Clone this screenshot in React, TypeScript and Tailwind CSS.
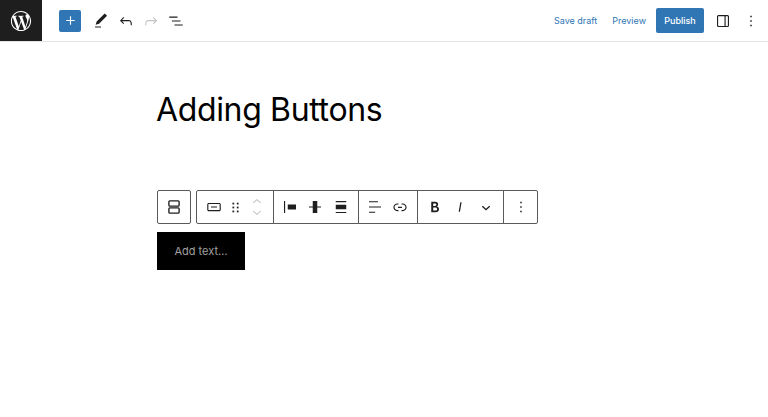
const font = { fontFamily: "Inter, 'Liberation Sans', sans-serif" };

function Icon({ children, size = 18 }: { children: React.ReactNode; size?: number }) {
  return (
    <svg width={size} height={size} viewBox="0 0 24 24" fill="#1e1e1e">
      {children}
    </svg>
  );
}

function WpLogo() {
  return (
    <svg width="22" height="22" viewBox="0 0 24 24" fill="#fff">
      <path d="M12 1C5.9 1 1 5.9 1 12s4.9 11 11 11 11-4.9 11-11S18.100 1 12 1zM2.100 12c0-1.400.3-2.800.9-4l4.700 13C4.400 19.400 2.100 16 2.100 12zM12 21.900c-1 0-1.900-.1-2.800-.4l3-8.700 3.100 8.400c0 .1 0 .1.100.1-1 .4-2.200.6-3.400.6zm1.400-14.600c.6 0 1.100-.1 1.100-.1.500-.1.500-.8 0-.8 0 0-1.600.1-2.700.1-1 0-2.600-.1-2.600-.1-.5 0-.6.800 0 .8 0 0 .5.100 1 .1l1.500 4.200-2.100 6.400L6 7.300c.6 0 1.100-.1 1.100-.1.500-.1.500-.8 0-.8 0 0-1.600.1-2.700.1h-.6C5.600 3.800 8.600 2.100 12 2.100c2.600 0 4.900 1 6.700 2.600h-.1c-1 0-1.700.9-1.700 1.800 0 .8.500 1.500 1 2.400.4.700.8 1.500.8 2.800 0 .9-.3 1.900-.8 3.300l-1 3.400-3.500-10.700zm3.600 13.300l3-8.800c.6-1.400.7-2.600.7-3.600 0-.4 0-.7-.1-1 .8 1.400 1.200 3.100 1.200 4.800 0 3.700-2 6.900-4.800 8.600z" />
    </svg>
  );
}

function ToolGroup({ children, last }: { children: React.ReactNode; last?: boolean }) {
  return (
    <div className={`flex h-full items-center ${last ? "" : "border-r border-[#5a5a5a]"}`}>
      {children}
    </div>
  );
}

function ToolIcon({ width, children }: { width: number; children: React.ReactNode }) {
  return (
    <div className="flex h-full items-center justify-center" style={{ width }}>
      {children}
    </div>
  );
}

export default function App() {
  return (
    <div className="h-[417px] w-[768px] overflow-hidden bg-white" style={font}>
      <header className="flex h-[42px] items-center border-b border-[#e5e5e5] bg-white">
        <div className="flex h-[41px] w-[42px] shrink-0 items-center justify-center bg-[#1e1e1e]">
          <WpLogo />
        </div>
        <div className="ml-[17px] flex h-[22px] w-[22px] items-center justify-center rounded-[2px] bg-[#3076b5]">
          <svg width="17" height="17" viewBox="0 0 24 24" fill="#fff">
            <path d="M18 11.200h-5.200V6h-1.600v5.200H6v1.600h5.200V18h1.600v-5.200H18z" />
          </svg>
        </div>
        <div className="ml-[7px] flex items-center">
          <ToolIcon width={25}>
            <Icon>
              <path d="M20.100 5.100L16.900 2 6.200 12.700l-1.300 4.400 4.500-1.300L20.100 5.100zM4 20.800h8v-1.500H4v1.500z" />
            </Icon>
          </ToolIcon>
          <ToolIcon width={25}>
            <Icon>
              <path d="M18.300 11.700c-.6-.6-1.400-.9-2.300-.9H6.700l2.900-3.300-1.100-1-4.500 5L8.500 16l1-1-2.700-2.700H16c.5 0 .9.200 1.300.5 1 1 1 3.400 1 4.500v.3h1.500v-.2c0-1.500 0-4.300-1.500-5.700z" />
            </Icon>
          </ToolIcon>
          <ToolIcon width={25}>
            <svg width="18" height="18" viewBox="0 0 24 24" fill="#c4c4c4">
              <path d="M15.600 6.500l-1.100 1 2.900 3.300H8c-.9 0-1.700.3-2.300.9-1.400 1.500-1.400 4.200-1.400 5.600v.2h1.500v-.3c0-1.100 0-3.500 1-4.500.3-.3.700-.5 1.300-.5h9.200L14.500 15l1.100 1.100 4.600-4.600-4.600-5z" />
            </svg>
          </ToolIcon>
          <ToolIcon width={25}>
            <Icon>
              <path d="M3 6h11v1.500H3V6zm3.500 5.200H18v1.500H6.500v-1.500zM10 16.500h11V18H10v-1.500z" />
            </Icon>
          </ToolIcon>
        </div>
        <div className="ml-auto flex items-center">
          <span className="text-[9px] text-[#3076b5]">Save draft</span>
          <span className="ml-[15px] text-[9px] text-[#3076b5]">Preview</span>
          <div className="ml-[10px] flex h-[25px] w-[48px] items-center justify-center rounded-[2px] bg-[#3076b5] text-[9px] font-medium text-white">
            Publish
          </div>
          <div className="ml-[9px] flex w-[20px] justify-center">
            <Icon>
              <path d="M18 4H6a2 2 0 0 0-2 2v12a2 2 0 0 0 2 2h12a2 2 0 0 0 2-2V6a2 2 0 0 0-2-2zM5.500 18V6c0-.3.2-.5.5-.5h8v13H6c-.3 0-.5-.2-.5-.5zm13 0c0 .3-.2.5-.5.500h-2.500v-13H18c.3 0 .5.2.5.5v12z" />
            </Icon>
          </div>
          <div className="ml-[8px] mr-[7px] flex w-[20px] justify-center">
            <Icon>
              <path d="M13 19h-2v-2h2v2zm0-6h-2v-2h2v2zm0-6h-2V5h2v2z" />
            </Icon>
          </div>
        </div>
      </header>
      <main className="pl-[157px]">
        <h1 className="mt-[46px] -ml-px text-[32px] leading-[44px] font-normal tracking-[-0.35px] text-black">
          Adding Buttons
        </h1>
        <div className="mt-[58px] flex h-[34px] items-stretch gap-[5px]">
          <div className="flex w-[34px] items-center justify-center rounded-[2px] border border-[#5a5a5a]">
            <svg width="18" height="18" viewBox="0 0 24 24" fill="none" stroke="#1e1e1e" strokeWidth="1.800">
              <rect x="5.200" y="3.900" width="13.600" height="7" rx="1.200" />
              <rect x="5.200" y="13.100" width="13.600" height="7" rx="1.200" />
            </svg>
          </div>
          <div className="flex items-center rounded-[2px] border border-[#5a5a5a]">
            <ToolGroup>
              <ToolIcon width={33}>
                <Icon>
                  <path d="M19 6.500H5c-1.100 0-2 .9-2 2v7c0 1.100.9 2 2 2h14c1.100 0 2-.9 2-2v-7c0-1.100-.9-2-2-2zm.500 9c0 .3-.2.500-.5.500H5c-.3 0-.5-.2-.5-.5v-7c0-.3.2-.5.5-.5h14c.3 0 .5.200.5.500v7zM8 12.800h8v-1.500H8v1.500z" />
                </Icon>
              </ToolIcon>
              <ToolIcon width={10}>
                <svg width="7" height="11" viewBox="0 0 8 12" fill="#1e1e1e">
                  <rect x="0.500" y="0.500" width="2" height="2" />
                  <rect x="5.500" y="0.500" width="2" height="2" />
                  <rect x="0.500" y="5" width="2" height="2" />
                  <rect x="5.500" y="5" width="2" height="2" />
                  <rect x="0.500" y="9.500" width="2" height="2" />
                  <rect x="5.500" y="9.500" width="2" height="2" />
                </svg>
              </ToolIcon>
              <ToolIcon width={33}>
                <svg width="10" height="18" viewBox="0 0 12 22" fill="none" stroke="#c4c4c4" strokeWidth="1.300">
                  <path d="M1.500 6L6 2l4.500 4M1.500 16L6 20l4.500-4" />
                </svg>
              </ToolIcon>
            </ToolGroup>
            <ToolGroup>
              <ToolIcon width={32}>
                <Icon>
                  <path d="M4 4h1.500v16H4V4zM9 8.700h11v6.600H9V8.700z" />
                </Icon>
              </ToolIcon>
              <ToolIcon width={18}>
                <Icon>
                  <path d="M9 4h6v7.250h5v1.500h-5V20H9v-7.250H4v-1.500h5V4z" />
                </Icon>
              </ToolIcon>
              <ToolIcon width={34}>
                <Icon>
                  <path d="M5 4h14v1.500H5V4zm0 5h14v6H5V9zm0 9.500h14V20H5v-1.500z" />
                </Icon>
              </ToolIcon>
            </ToolGroup>
            <ToolGroup>
              <ToolIcon width={32}>
                <Icon>
                  <path d="M4 19.800h8.200v-1.500H4v1.500zm0-7h16v-1.500H4v1.500zM4 4.300v1.500h12V4.300H4z" />
                </Icon>
              </ToolIcon>
              <div className="flex h-full w-[26px] items-center justify-start">
                <Icon>
                  <path d="M15.600 7.200H14v1.500h1.600c2 0 3.700 1.700 3.700 3.700s-1.700 3.700-3.700 3.700H14v1.500h1.600c2.800 0 5.200-2.300 5.200-5.200 0-2.900-2.300-5.200-5.200-5.200zM4.700 12.400c0-2 1.700-3.700 3.700-3.700H10V7.200H8.400c-2.900 0-5.200 2.300-5.200 5.200 0 2.900 2.300 5.200 5.200 5.200H10v-1.500H8.400c-2 0-3.700-1.700-3.700-3.700zm4.600.9h5.300v-1.500H9.300v1.500z" />
                </Icon>
              </div>
            </ToolGroup>
            <ToolGroup>
              <ToolIcon width={34}>
                <Icon>
                  <path d="M14.700 11.300c1-.6 1.500-1.600 1.500-3 0-2.300-1.300-3.400-4-3.400H7v14h5.800c1.400 0 2.500-.3 3.300-1 .8-.7 1.200-1.700 1.200-2.900.1-1.900-.8-3.100-2.600-3.700zm-5.100-4h2.300c.6 0 1.100.1 1.400.4.300.3.500.7.500 1.200s-.2 1-.5 1.200c-.3.3-.8.400-1.400.4H9.600V7.300zm4.600 9c-.4.300-1 .4-1.700.4H9.600v-3.900h2.900c.7 0 1.300.2 1.700.5.400.3.600.8.600 1.500s-.2 1.200-.6 1.500z" />
                </Icon>
              </ToolIcon>
              <ToolIcon width={16}>
                <Icon>
                  <path d="M12.500 5L10 19h1.900l2.500-14z" />
                </Icon>
              </ToolIcon>
              <ToolIcon width={35}>
                <Icon>
                  <path d="M17.500 11.600L16.300 10.300l-4.300 3.900-4.300-3.900-1.200 1.300 5.500 5 5.500-5z" />
                </Icon>
              </ToolIcon>
            </ToolGroup>
            <ToolGroup last>
              <ToolIcon width={33}>
                <Icon>
                  <path d="M13 19h-2v-2h2v2zm0-6h-2v-2h2v2zm0-6h-2V5h2v2z" />
                </Icon>
              </ToolIcon>
            </ToolGroup>
          </div>
        </div>
        <div className="mt-[8px] flex h-[38px] w-[88px] items-center justify-center bg-black pt-px text-[11px] text-[#a0a0a0]">
          Add text…
        </div>
      </main>
    </div>
  );
}
